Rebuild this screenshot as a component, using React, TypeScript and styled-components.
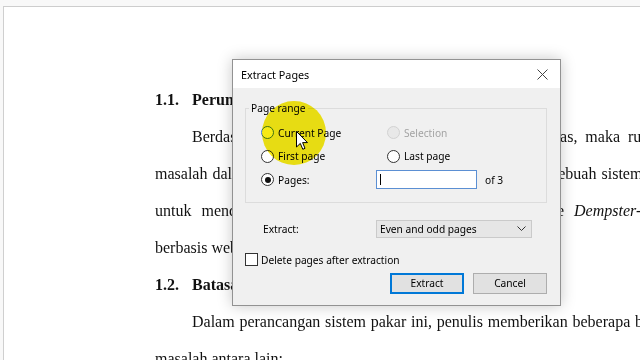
import styled, { createGlobalStyle } from "styled-components";

const GlobalStyle = createGlobalStyle`
  html, body { margin: 0; padding: 0; background: #f8f8f8; }
  #root { width: 640px; height: 360px; }
`;

const uiFont = `"Noto Sans", "Open Sans", sans-serif`;
const docFont = `"Liberation Serif", "Times New Roman", serif`;

const Screen = styled.div`
  position: relative;
  width: 640px;
  height: 360px;
  overflow: hidden;
  background: #f8f8f8;
`;

const Page = styled.div`
  margin: 6px 0 0 3px;
  height: 360px;
  background: #fff;
  border-top: 1px solid #cdcdcd;
  border-left: 1px solid #cfcfcf;
  padding: 74px 0 0 151px;
  font-family: ${docFont};
  font-size: 16px;
  line-height: 37px;
  color: #111;
`;

const Column = styled.div`
  width: 528px;
`;

const Heading = styled.div`
  display: flex;
  font-weight: bold;
  white-space: nowrap;
`;

const Num = styled.span`
  width: 37px;
`;

const Line = styled.div<{ $indent?: boolean; $last?: boolean }>`
  white-space: nowrap;
  text-align: justify;
  text-align-last: ${(p) => (p.$last ? "left" : "justify")};
  padding-left: ${(p) => (p.$indent ? "37px" : "0")};
`;

/* ---- dialog ---- */

const Dialog = styled.div`
  position: absolute;
  left: 232px;
  top: 59px;
  width: 329px;
  height: 247px;
  box-sizing: border-box;
  border: 1px solid #929292;
  background: #f0f0f0;
  box-shadow: 0 0 14px rgba(0, 0, 0, 0.22);
  display: flex;
  flex-direction: column;
  font-family: ${uiFont};
  font-size: 10.2px;
  color: #000;
`;

const TitleBar = styled.div`
  height: 28px;
  flex-shrink: 0;
  background: #fff;
  display: flex;
  align-items: center;
  justify-content: space-between;
  padding: 0 12px 0 8px;
  font-size: 10.8px;
`;

const Body = styled.div`
  flex: 1;
  display: flex;
  flex-direction: column;
  padding: 0 13px 11px 12px;
`;

const Group = styled.fieldset`
  margin: 12px 0 0 0;
  padding: 0;
  min-width: 0;
  border: 1px solid #dcdcdc;
`;

const Legend = styled.legend`
  margin-left: 3px;
  padding: 0 2px;
  line-height: 16px;
`;

const RadioGrid = styled.div`
  display: grid;
  grid-template-columns: 115px auto;
  grid-auto-rows: 23.5px;
  align-items: center;
  padding: 5px 0 10px 15px;
`;

const Option = styled.label<{ $disabled?: boolean; $shift?: number }>`
  display: flex;
  align-items: center;
  gap: 4px;
  margin-left: ${(p) => p.$shift ?? 0}px;
  color: ${(p) => (p.$disabled ? "#a3a3a3" : "#000")};
  white-space: nowrap;
`;

const Radio = styled.span<{ $checked?: boolean; $disabled?: boolean; $hover?: boolean }>`
  width: 13px;
  height: 13px;
  box-sizing: border-box;
  border-radius: 50%;
  border: 1px solid
    ${(p) => (p.$disabled ? "#d2d2d2" : p.$hover ? "#3d7bd0" : "#333")};
  background: ${(p) => (p.$disabled ? "#e8e8e8" : "#fff")};
  display: flex;
  align-items: center;
  justify-content: center;
  &::after {
    content: "";
    width: 6px;
    height: 6px;
    border-radius: 50%;
    background: ${(p) => (p.$checked ? "#111" : "transparent")};
  }
`;

const PagesCell = styled.div`
  display: flex;
  align-items: center;
  gap: 8px;
`;

const TextBox = styled.div`
  width: 101px;
  height: 19px;
  box-sizing: border-box;
  border: 1px solid #5b8fd3;
  background: #fff;
  display: flex;
  align-items: center;
  padding-left: 3px;
`;

const Caret = styled.span`
  width: 1px;
  height: 11px;
  background: #000;
`;

const ExtractRow = styled.div`
  display: grid;
  grid-template-columns: 113px 156px;
  align-items: center;
  margin-top: 17px;
  padding-left: 18px;
`;

const Combo = styled.div`
  height: 18px;
  box-sizing: border-box;
  border: 1px solid #cacaca;
  background: #e6e6e6;
  display: flex;
  align-items: center;
  justify-content: space-between;
  padding: 0 5px 0 3px;
`;

const CheckRow = styled.label`
  display: flex;
  align-items: center;
  gap: 3px;
  margin-top: 15px;
`;

const CheckBox = styled.span`
  width: 13px;
  height: 13px;
  box-sizing: border-box;
  border: 1px solid #333;
  background: #fff;
`;

const Buttons = styled.div`
  display: flex;
  justify-content: flex-end;
  gap: 9px;
  margin-top: 6px;
`;

const Button = styled.button<{ $primary?: boolean }>`
  width: 74px;
  height: 21px;
  box-sizing: border-box;
  font-family: ${uiFont};
  font-size: 10.2px;
  color: #000;
  background: #e1e1e1;
  border: ${(p) => (p.$primary ? "2px solid #0078d7" : "1px solid #adadad")};
  padding: 0;
`;

/* ---- screen-recorder overlay ---- */

const Highlight = styled.div`
  position: absolute;
  left: 262px;
  top: 101px;
  width: 64px;
  height: 64px;
  border-radius: 50%;
  background: #f6ea14;
  mix-blend-mode: multiply;
`;

const Pointer = styled.svg`
  position: absolute;
  left: 296px;
  top: 131px;
`;

export default function App() {
  return (
    <Screen>
      <GlobalStyle />
      <Page>
        <Column>
          <Heading>
            <Num>1.1.</Num>Perumusan Masalah
          </Heading>
          <Line $indent>
            Berdasarkan latar belakang yang telah diuraikan di atas, maka rumusan
          </Line>
          <Line>
            masalah dalam penelitian ini adalah bagaimana membangun sebuah sistem pakar
          </Line>
          <Line>
            untuk mendiagnosa penyakit dengan menggunakan metode <i>Dempster-Shafer</i>
          </Line>
          <Line $last>berbasis web.</Line>
          <Heading>
            <Num>1.2.</Num>Batasan Masalah
          </Heading>
          <Line $indent>
            Dalam perancangan sistem pakar ini, penulis memberikan beberapa batasan
          </Line>
          <Line $last>masalah antara lain;</Line>
        </Column>
      </Page>

      <Dialog>
        <TitleBar>
          <span>Extract Pages</span>
          <svg width="11" height="11" viewBox="0 0 11 11">
            <path d="M0.5 0.5 L10.5 10.5 M10.5 0.5 L0.5 10.5" stroke="#444" strokeWidth="1" />
          </svg>
        </TitleBar>
        <Body>
          <Group>
            <Legend>Page range</Legend>
            <RadioGrid>
              <Option>
                <Radio $hover />
                Current Page
              </Option>
              <Option $disabled $shift={11}>
                <Radio $disabled />
                Selection
              </Option>
              <Option>
                <Radio />
                First page
              </Option>
              <Option $shift={11}>
                <Radio />
                Last page
              </Option>
              <Option>
                <Radio $checked />
                Pages:
              </Option>
              <PagesCell>
                <TextBox>
                  <Caret />
                </TextBox>
                of 3
              </PagesCell>
            </RadioGrid>
          </Group>
          <ExtractRow>
            <span>Extract:</span>
            <Combo>
              <span>Even and odd pages</span>
              <svg width="9" height="5" viewBox="0 0 9 5">
                <path d="M0.5 0.5 L4.5 4.5 L8.5 0.5" fill="none" stroke="#333" strokeWidth="1" />
              </svg>
            </Combo>
          </ExtractRow>
          <CheckRow>
            <CheckBox />
            Delete pages after extraction
          </CheckRow>
          <Buttons>
            <Button $primary>Extract</Button>
            <Button>Cancel</Button>
          </Buttons>
        </Body>
      </Dialog>

      <Highlight />
      <Pointer width="13" height="20" viewBox="0 0 13 20">
        <path
          d="M0.5 0.5 L0.5 16 L4.3 12.4 L6.8 18.3 L9 17.3 L6.6 11.6 L11.5 11.6 Z"
          fill="#fff"
          stroke="#000"
          strokeWidth="1"
          strokeLinejoin="round"
        />
      </Pointer>
    </Screen>
  );
}
